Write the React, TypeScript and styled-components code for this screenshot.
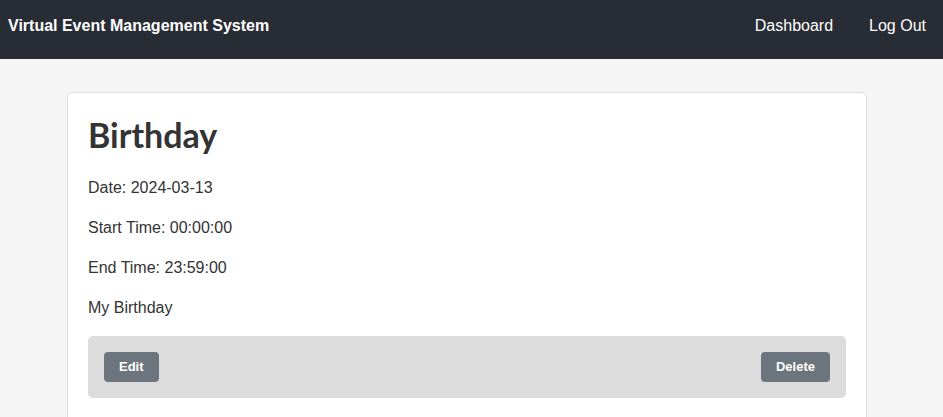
import styled, { createGlobalStyle } from 'styled-components'

const GlobalStyle = createGlobalStyle`
  body {
    margin: 0;
    background: #f5f5f5;
    font-family: "Liberation Sans", Arial, sans-serif;
    color: #333;
  }
`

const NavBar = styled.nav`
  display: flex;
  align-items: flex-start;
  justify-content: space-between;
  height: 59px;
  box-sizing: border-box;
  padding: 17px 17px 0 8px;
  background: #282c34;
  color: #fff;
  line-height: 18px;
`

const Brand = styled.span`
  font-size: 16px;
  font-weight: 700;
`

const NavLinks = styled.div`
  display: flex;
  gap: 36px;
`

const NavLink = styled.a`
  color: #fff;
  font-size: 16px;
  text-decoration: none;
`

const Card = styled.section`
  width: 800px;
  box-sizing: border-box;
  margin: 33px 0 0 67px;
  padding: 20px;
  background: #fff;
  border: 1px solid #ddd;
  border-radius: 5px;
`

const Title = styled.h1`
  margin: 2px 0 20px;
  font-family: "Lato", "Open Sans", sans-serif;
  font-size: 34px;
  font-weight: 700;
  line-height: 1.2;
  color: #333;
`

const Detail = styled.p`
  margin: 0 0 16px;
  font-size: 16px;
  line-height: 24px;
`

const Actions = styled.div`
  display: flex;
  justify-content: space-between;
  align-items: center;
  margin-top: 16px;
  padding: 16px;
  background: #dcdcdc;
  border-radius: 5px;
`

const Button = styled.button`
  height: 30px;
  padding: 0 15px;
  border: none;
  border-radius: 4px;
  background: #6c757d;
  color: #fff;
  font-family: "Liberation Sans", Arial, sans-serif;
  font-size: 13px;
  font-weight: 700;
  cursor: pointer;
`

export default function App() {
  return (
    <>
      <GlobalStyle />
      <NavBar>
        <Brand>Virtual Event Management System</Brand>
        <NavLinks>
          <NavLink href="#">Dashboard</NavLink>
          <NavLink href="#">Log Out</NavLink>
        </NavLinks>
      </NavBar>
      <Card>
        <Title>Birthday</Title>
        <Detail>Date: 2024-03-13</Detail>
        <Detail>Start Time: 00:00:00</Detail>
        <Detail>End Time: 23:59:00</Detail>
        <Detail>My Birthday</Detail>
        <Actions>
          <Button>Edit</Button>
          <Button>Delete</Button>
        </Actions>
        <Detail>&nbsp;</Detail>
      </Card>
    </>
  )
}
